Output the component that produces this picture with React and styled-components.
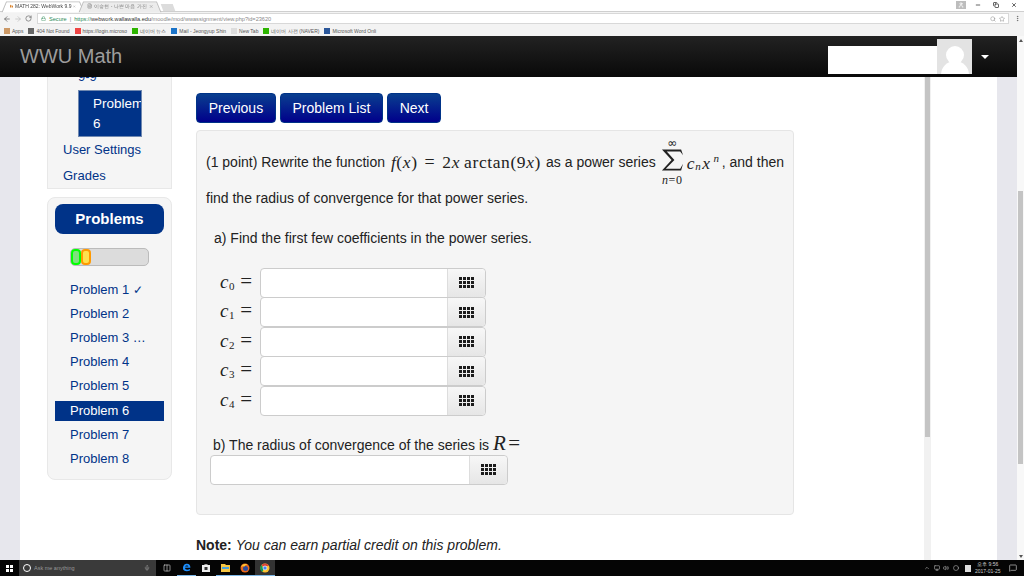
import React from 'react'
import styled, { createGlobalStyle } from 'styled-components'
import { ArrowLeft, ArrowRight, RotateCw, Lock, Search, Star, MoreVertical, User, X, Minus, Copy, FileText, Mic, ChevronUp, Monitor, Volume2, MessageSquare, Columns2, Circle } from 'lucide-react'

const Global = createGlobalStyle`
  html, body { margin: 0; padding: 0; width: 1024px; height: 576px; overflow: hidden; background: #fff; }
  * { box-sizing: border-box; }
  body { font-family: "Liberation Sans", Arial, sans-serif; color: #222; }
`
const Screen = styled.div`
  width: 1024px;
  height: 576px;
  display: flex;
  flex-direction: column;
  overflow: hidden;
`
const TabStrip = styled.div`
  height: 12px;
  background: #fff;
  display: flex;
  align-items: flex-end;
  padding-left: 6px;
  border-bottom: 1px solid #cfcfcf;
  flex: none;
`
const Tab = styled.div`
  width: 74px;
  height: 10px;
  margin-right: 3px;
  padding: 0 4px;
  display: flex;
  align-items: center;
  gap: 2px;
  font-size: 5px;
  color: ${p => (p.$active ? '#444' : '#777')};
  white-space: nowrap;
  position: relative;
  span { flex: 1; }
  &::before {
    content: '';
    position: absolute;
    inset: 0 -2px -1px;
    background: ${p => (p.$active ? '#fff' : '#ececec')};
    border: 1px solid #bdbdbd;
    border-bottom: 0;
    transform: perspective(20px) rotateX(12deg);
    z-index: 0;
  }
  > * { position: relative; z-index: 1; }
`
const NewTab = styled.div`
  width: 12px;
  height: 7px;
  margin-left: 2px;
  background: #dcdcdc;
  transform: skewX(20deg);
`
const WindowControls = styled.div`
  margin-left: auto;
  align-self: flex-start;
  height: 9px;
  display: flex;
  align-items: center;
  gap: 12px;
  padding-right: 7px;
  color: #333;
`
const ProfileTile = styled.div`
  width: 10px;
  height: 8px;
  margin-right: -3px;
  background: #bdbdbd;
  color: #fff;
  display: flex;
  align-items: center;
  justify-content: center;
`
const AddressRow = styled.div`
  height: 13px;
  background: #f3f3f3;
  display: flex;
  align-items: center;
  padding: 0 3px;
  gap: 3px;
  color: #555;
  flex: none;
`
const Omnibox = styled.div`
  flex: 1;
  height: 11px;
  margin: 0 2px;
  background: #fff;
  border: 1px solid #d8d8d8;
  display: flex;
  align-items: center;
  padding: 0 3px;
  gap: 3px;
  font-size: 5.6px;
  color: #888;
  white-space: nowrap;
  b { color: #333; font-weight: 400; }
  em { font-style: normal; color: #2e8b57; }
`
const Spacer = styled.div`
  flex: 1;
`
const BookmarkRow = styled.div`
  height: 11px;
  background: #f3f3f3;
  display: flex;
  align-items: center;
  padding-left: 4px;
  gap: 5px;
  font-size: 5px;
  color: #555;
  flex: none;
`
const Bookmark = styled.div`
  display: flex;
  align-items: center;
  gap: 2px;
  white-space: nowrap;
  i { display: block; width: 6px; height: 6px; background: ${p => p.$color}; }
`
const Desktop = styled.div`
  flex: 1;
  min-height: 0;
  display: flex;
`
const PageColumn = styled.div`
  width: 1017px;
  flex: none;
  display: flex;
  flex-direction: column;
`
const NavBar = styled.div`
  height: 41px;
  background: linear-gradient(#222, #090909);
  display: flex;
  align-items: center;
  padding-left: 20px;
  flex: none;
`
const Brand = styled.div`
  font-size: 20px;
  color: #9d9d9d;
  flex: 1;
`
const LoginBox = styled.div`
  width: 109px;
  height: 28px;
  margin-top: 7px;
  background: #fff;
`
const Avatar = styled.div`
  width: 35px;
  height: 35px;
  background: #e3e3e3;
  svg { display: block; }
`
const Caret = styled.div`
  width: 0;
  height: 0;
  margin: 0 28px 0 9px;
  border-left: 4px solid transparent;
  border-right: 4px solid transparent;
  border-top: 4px solid #fff;
`
const Viewport = styled.div`
  flex: 1;
  min-height: 0;
  display: flex;
  overflow: hidden;
  background: #fff;
`
const Gutter = styled.div`
  width: 20px;
  background: #e7e7ed;
  flex: none;
`
const Main = styled.div`
  width: 904px;
  flex: none;
  display: flex;
  gap: 24px;
  padding-left: 27px;
`
const Rail = styled.div`
  width: 7px;
  background: #f1f1f1;
  flex: none;
  display: flex;
  padding: 0 1px 123px;
`
const Margin = styled.div`
  flex: 1;
`
const Scrollbar = styled.div`
  width: 7px;
  background: #f8f8f8;
  flex: none;
  display: flex;
  flex-direction: column;
  align-items: center;
  justify-content: space-between;
  padding: 3px 0 2px;
`
const ScrollArrow = styled.div`
  width: 0;
  height: 0;
  border-left: 2px solid transparent;
  border-right: 2px solid transparent;
  border-bottom: ${p => (p.$down ? '0' : '3px solid #555')};
  border-top: ${p => (p.$down ? '3px solid #555' : '0')};
`
const Thumb = styled.div`
  flex: 1;
  background: #c4c4c4;
`
const PageThumb = styled(Thumb)`
  width: 5px;
  flex: none;
  height: 273px;
  margin: 148px 0 90px;
`
const Sidebar = styled.div`
  width: 125px;
  flex: none;
  display: flex;
  flex-direction: column;
`
const TopWell = styled.div`
  height: 112px;
  background: #f5f5f5;
  border: 1px solid #e8e8e8;
  border-top: 0;
  position: relative;
  overflow: hidden;
  padding: 13px 0 0 15px;
  font-size: 13px;
`
const Clipped = styled.div`
  position: absolute;
  top: -8px;
  left: 30px;
  color: #038;
`
const CurrentLink = styled.div`
  width: 64px;
  height: 47px;
  margin-left: 15px;
  padding: 3px 0 0 14px;
  background: #038;
  border: 1px solid #6f88b0;
  color: #fff;
  line-height: 20px;
  overflow: hidden;
  font-size: 13.5px;
`
const SideLink = styled.div`
  color: #038;
  height: 26px;
  line-height: 26px;
`
const ProblemsWell = styled.div`
  margin-top: 8px;
  height: 283px;
  background: #f5f5f5;
  border: 1px solid #e8e8e8;
  border-radius: 8px;
  padding: 6px 7px;
  display: flex;
  flex-direction: column;
`
const ProblemsHead = styled.div`
  height: 30px;
  background: #038;
  border-radius: 8px;
  color: #fff;
  font-weight: 700;
  font-size: 15px;
  line-height: 30px;
  text-align: center;
`
const Meter = styled.div`
  width: 79px;
  height: 22px;
  margin: 14px 0 14px 15px;
  background: #dcdcdc;
  border: 1px solid #bbb;
  border-radius: 5px;
  display: flex;
`
const MeterBar = styled.div`
  width: 10px;
  background: ${p => p.$fill};
  border: 2px solid ${p => p.$edge};
  border-radius: 4px;
`
const ProblemRow = styled.div`
  height: 20.5px;
  margin-bottom: 3.65px;
  padding-left: 15px;
  font-size: 13px;
  line-height: 20.5px;
  color: ${p => (p.$current ? '#fff' : '#038')};
  background: ${p => (p.$current ? '#038' : 'transparent')};
`
const Check = styled.span`
  font-family: "DejaVu Sans", sans-serif;
  font-weight: 200;
  font-size: 12px;
`
const Content = styled.div`
  flex: 1;
  min-width: 0;
  padding-top: 16px;
  display: flex;
  flex-direction: column;
`
const Pager = styled.div`
  display: flex;
  gap: 4px;
`
const NavButton = styled.div`
  height: 30px;
  padding: 0 11.7px;
  background: linear-gradient(#0a3f8f, #00008b);
  border: 1px solid #038;
  border-radius: 4px;
  color: #fff;
  font-size: 14px;
  line-height: 28px;
`
const ProblemCard = styled.div`
  width: 598px;
  height: 385px;
  margin-top: 7px;
  background: #f5f5f5;
  border: 1px solid #e5e5e5;
  border-radius: 4px;
  padding: 0 9px;
  font-size: 14px;
  display: flex;
  flex-direction: column;
`
const Statement = styled.div`
  height: 57px;
  display: flex;
  align-items: center;
  white-space: pre;
  padding-top: 5px;
`
const Line = styled.div`
  height: 20px;
  line-height: 20px;
  margin-top: ${p => p.$top || 0}px;
  padding-left: ${p => p.$indent || 0}px;
  white-space: pre;
`
const MathText = styled.span`
  font-family: "Liberation Serif", serif;
  font-size: ${p => p.$size || 17.5}px;
  line-height: 0;
  color: #222;
  letter-spacing: 0.6px;
  margin: 0 ${p => p.$after || 0}px 0 ${p => p.$before || 0}px;
`
const Eq = styled.span`
  font-size: ${p => p.$size || 18}px;
  margin: 0 ${p => p.$after || 0}px 0 ${p => p.$before || 7}px;
`
const Fn = styled.span`
  margin-left: 4px;
`
const Sum = styled.span`
  display: inline-flex;
  flex-direction: column;
  align-items: center;
  width: 24px;
  margin: 0 3px 0 5px;
  font-family: "Liberation Serif", serif;
  line-height: 1;
  svg { display: block; }
`
const SumTop = styled.span`
  font-family: "DejaVu Sans", sans-serif;
  font-size: 12px;
  height: 9px;
  line-height: 9px;
`
const SumBottom = styled.span`
  font-size: 12px;
  letter-spacing: 0.5px;
  height: 11px;
  margin-top: 2px;
  white-space: nowrap;
`
const Sup = styled.sup`
  font-size: 11px;
  line-height: 0;
  margin-left: 3px;
`
const Sub = styled.sub`
  font-size: 11px;
  line-height: 0;
  vertical-align: -2px;
  margin-right: 1px;
`
const AnswerList = styled.div`
  margin-top: 20px;
  display: flex;
  flex-direction: column;
  gap: 0.3px;
`
const AnswerRow = styled.div`
  height: 29.2px;
  display: flex;
  align-items: center;
  padding-left: ${p => p.$indent || 0}px;
`
const AnswerLabel = styled.div`
  width: 54px;
  padding-left: 14px;
  white-space: pre;
`
const AnswerBox = styled.div`
  width: ${p => p.$width}px;
  height: 30px;
  display: flex;
  background: #fff;
  border: 1px solid #ccc;
  border-radius: 4px;
  flex: none;
`
const Field = styled.div`
  flex: 1;
`
const Palette = styled.div`
  width: 38px;
  border-left: 1px solid #ddd;
  border-radius: 0 4px 4px 0;
  background: linear-gradient(#f7f7f7, #e6e6e6);
  display: flex;
  align-items: center;
  justify-content: center;
`
const Dots = styled.div`
  display: grid;
  grid-template-columns: repeat(4, 3px);
  grid-auto-rows: 3px;
  gap: 1px;
  i { background: #1c1c1c; }
`
const Note = styled.div`
  margin-top: 22px;
  font-size: 14px;
  color: #222;
  white-space: pre;
  em { font-style: italic; }
`
const TaskBar = styled.div`
  height: 16px;
  background: #050505;
  display: flex;
  align-items: center;
  color: #ccc;
  flex: none;
`
const StartTile = styled.div`
  width: 19px;
  display: flex;
  justify-content: center;
`
const WinLogo = styled.div`
  display: grid;
  grid-template-columns: 3px 3px;
  grid-auto-rows: 3px;
  gap: 1px;
  i { background: #fff; }
`
const SearchBox = styled.div`
  width: 137px;
  height: 16px;
  background: #3a3a3a;
  display: flex;
  align-items: center;
  gap: 3px;
  padding: 0 6px 0 4px;
  font-size: 5.5px;
  color: #999;
`
const Ring = styled.div`
  width: 8px;
  height: 8px;
  border: 1px solid #fff;
  border-radius: 50%;
`
const TaskIcons = styled.div`
  display: flex;
  align-items: center;
  height: 16px;
  padding-left: 1px;
  flex: 1;
`
const TaskSlot = styled.div`
  width: 19.6px;
  height: 16px;
  display: flex;
  align-items: center;
  justify-content: center;
  background: ${p => (p.$focused ? '#333' : 'transparent')};
  border-bottom: 1px solid ${p => (p.$open ? '#7db8e8' : 'transparent')};
  svg { display: block; }
`
const Tray = styled.div`
  display: flex;
  align-items: center;
  gap: 3.5px;
  padding-right: 7px;
  font-size: 5px;
`
const Clock = styled.div`
  text-align: center;
  line-height: 7px;
  margin-right: 5px;
`
const ImeMark = styled.div`
  width: 6px;
  height: 7px;
  margin-left: 3px;
  background: #ddd;
`

const problems = ['Problem 1', 'Problem 2', 'Problem 3 …', 'Problem 4', 'Problem 5', 'Problem 6', 'Problem 7', 'Problem 8']
const bookmarks = [
  ['Apps', '#c96'], ['404 Not Found', '#666'], ['https://login.microso', '#e44'], ['네이버 뉴스', '#2db400'],
  ['Mail - Jeongyup Shin', '#1a73c8'], ['New Tab', '#ddd'], ['네이버 사전 (NAVER)', '#2db400'], ['Microsoft Word Onli', '#2b579a'],
]
const coefficients = [0, 1, 2, 3, 4]

const PaletteDots = () => (
  <Palette>
    <Dots>{Array.from({ length: 12 }, (_, i) => <i key={i} />)}</Dots>
  </Palette>
)

function MiniFlame() {
  return <svg width="6" height="6" viewBox="0 0 6 6"><path d="M0 6V2l2-2v6zM3 6V1l3 2v3z" fill="#d9822b" /></svg>
}

export default function App() {
  return (
    <Screen>
      <Global />
      <TabStrip>
        <Tab $active><MiniFlame /><span>MATH 282: WebWork 9.9</span><X size={5} /></Tab>
        <Tab><FileText size={6} /><span>이승현 - 나쁜 마음 가진</span><X size={5} /></Tab>
        <NewTab />
        <WindowControls>
          <ProfileTile><User size={6} strokeWidth={3} /></ProfileTile>
          <Minus size={6} strokeWidth={3} />
          <Copy size={6} strokeWidth={3} />
          <X size={6} strokeWidth={3} />
        </WindowControls>
      </TabStrip>
      <AddressRow>
        <ArrowLeft size={8} />
        <ArrowRight size={8} color="#bbb" />
        <RotateCw size={7} />
        <Omnibox>
          <Lock size={5} color="#2e8b57" /><em>Secure</em>|
          <span><em>https://</em><b>webwork.wallawalla.edu</b>/moodle/mod/wwassignment/view.php?id=23620</span>
          <Spacer />
          <Search size={6} /><Star size={6} />
        </Omnibox>
        <MoreVertical size={7} />
      </AddressRow>
      <BookmarkRow>
        {bookmarks.map(([name, color]) => (
          <Bookmark key={name} $color={color}><i />{name}</Bookmark>
        ))}
      </BookmarkRow>
      <Desktop>
        <PageColumn>
          <NavBar>
            <Brand>WWU Math</Brand>
            <LoginBox />
            <Avatar>
              <svg width="35" height="35" viewBox="0 0 35 35">
                <circle cx="18" cy="16" r="9" fill="#fff" />
                <ellipse cx="18" cy="36" rx="14" ry="14" fill="#fff" />
              </svg>
            </Avatar>
            <Caret />
          </NavBar>
          <Viewport>
            <Gutter />
            <Main>
              <Sidebar>
                <TopWell>
                  <Clipped>9-9</Clipped>
                  <CurrentLink>Problem 6</CurrentLink>
                  <SideLink>User Settings</SideLink>
                  <SideLink>Grades</SideLink>
                </TopWell>
                <ProblemsWell>
                  <ProblemsHead>Problems</ProblemsHead>
                  <Meter>
                    <MeterBar $fill="#7de27d" $edge="#0f0" />
                    <MeterBar $fill="#ffe14d" $edge="#f90" />
                  </Meter>
                  {problems.map((p, i) => (
                    <ProblemRow key={p} $current={p === 'Problem 6'}>
                      {p}{i === 0 && <Check> ✓</Check>}
                    </ProblemRow>
                  ))}
                </ProblemsWell>
              </Sidebar>
              <Content>
                <Pager>
                  <NavButton>Previous</NavButton>
                  <NavButton>Problem List</NavButton>
                  <NavButton>Next</NavButton>
                </Pager>
                <ProblemCard>
                  <Statement>
                    (1 point) Rewrite the function <MathText $before={2} $after={5}><i>f</i>(<i>x</i>)<Eq $after={7}>=</Eq>2<i>x</i><Fn>arctan</Fn>(9<i>x</i>)</MathText>as a power series
                    <Sum>
                      <SumTop>∞</SumTop>
                      <svg width="23" height="24" viewBox="0 0 24 24"><path d="M1 1h20l2 6-3-4H6l8 9-9 9h15l3-5-2 7H1l10-11z" fill="#222" /></svg>
                      <SumBottom><i>n</i>=0</SumBottom>
                    </Sum>
                    <MathText $after={2}><i>c</i><Sub><i>n</i></Sub><i>x</i><Sup><i>n</i></Sup></MathText>, and then
                  </Statement>
                  <Line>find the radius of convergence for that power series.</Line>
                  <Line $top={20} $indent={8}>a) Find the first few coefficients in the power series.</Line>
                  <AnswerList>
                    {coefficients.map(n => (
                      <AnswerRow key={n}>
                        <AnswerLabel><MathText $size={19}><i>c</i><Sub>{n}</Sub><Eq $before={4} $size={21}>=</Eq></MathText></AnswerLabel>
                        <AnswerBox $width={226}><Field /><PaletteDots /></AnswerBox>
                      </AnswerRow>
                    ))}
                  </AnswerList>
                  <Line $top={20} $indent={7}>b) The radius of convergence of the series is <MathText $size={21}><i>R</i><Eq $before={2} $size={21}>=</Eq></MathText></Line>
                  <AnswerRow $indent={4}>
                    <AnswerBox $width={298}><Field /><PaletteDots /></AnswerBox>
                  </AnswerRow>
                </ProblemCard>
                <Note><b>Note:</b> <em>You can earn partial credit on this problem.</em></Note>
              </Content>
            </Main>
            <Rail><Thumb /></Rail>
            <Margin />
            <Gutter />
          </Viewport>
        </PageColumn>
        <Scrollbar>
          <ScrollArrow />
          <PageThumb />
          <ScrollArrow $down />
        </Scrollbar>
      </Desktop>
      <TaskBar>
        <StartTile><WinLogo><i /><i /><i /><i /></WinLogo></StartTile>
        <SearchBox><Ring />Ask me anything<Spacer /><Mic size={6} /></SearchBox>
        <TaskIcons>
          <TaskSlot><Columns2 size={8} /></TaskSlot>
          <TaskSlot $open>
            <svg width="9" height="9" viewBox="0 0 9 9"><path d="M1 5.5C1 2 3 .8 5 .8c2.2 0 3.4 1.6 3.4 4H3c0 2 2.600 2.400 5 1.200v1.600C4.500 8.800 1 8 1 5.500zM3 3.500h3.400C6.300 2 3.500 2 3 3.500z" fill="#1e90ff" /></svg>
          </TaskSlot>
          <TaskSlot>
            <svg width="8" height="9" viewBox="0 0 8 9"><path d="M0 2h2.200C2.300.5 5.700.5 5.800 2H8v7H0zM3 2h2C4.800 1.200 3.200 1.200 3 2z" fill="#eee" /><rect x="2.500" y="4" width="3" height="3" fill="#333" /></svg>
          </TaskSlot>
          <TaskSlot $open>
            <svg width="9" height="8" viewBox="0 0 9 8"><path d="M0 0h4l1 1h4v7H0z" fill="#f5c542" /><rect x="1" y="3" width="7" height="2" fill="#4aa3df" /></svg>
          </TaskSlot>
          <TaskSlot $open>
            <svg width="10" height="10" viewBox="0 0 10 10"><circle cx="5" cy="5" r="4.500" fill="#e8681d" /><circle cx="5.500" cy="5.500" r="2.500" fill="#2b4a9b" /><path d="M1 4c1-3 5-4 7-2-2-.5-3 .5-3.500 1.500C3.500 3 2 3 1 4z" fill="#fc3" /></svg>
          </TaskSlot>
          <TaskSlot $open $focused>
            <svg width="10" height="10" viewBox="0 0 10 10"><circle cx="5" cy="5" r="4.500" fill="#fbc02d" /><path d="M5 .5A4.500 4.500 0 0 1 9 3H5a2 2 0 0 0-2 .8L1.500 2A4.500 4.500 0 0 1 5 .5z" fill="#db4437" /><path d="M1.500 2L3.500 6l-1 3A4.500 4.500 0 0 1 1.500 2z" fill="#0f9d58" /><circle cx="5" cy="5" r="2" fill="#4285f4" stroke="#fff" strokeWidth=".6" /></svg>
          </TaskSlot>
        </TaskIcons>
        <Tray>
          <ChevronUp size={6} /><Monitor size={6} /><Volume2 size={6} /><Circle size={6} />
          <ImeMark />
          <Clock>오후 9:56<br />2017-01-25</Clock>
          <MessageSquare size={8} />
        </Tray>
      </TaskBar>
    </Screen>
  )
}
